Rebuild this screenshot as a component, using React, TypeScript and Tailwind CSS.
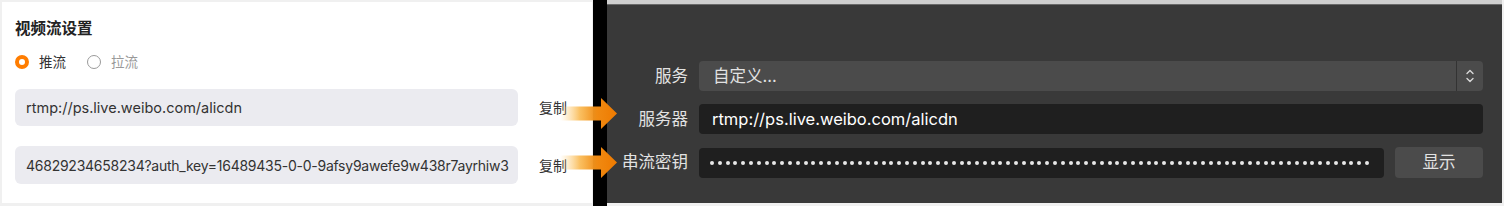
import React from 'react'

const FONT = { fontFamily: "Inter, 'Noto Sans CJK SC', sans-serif" }

function Arrow({ top, id }: { top: number; id: string }) {
  return (
    <svg className="absolute left-[560px]" style={{ top }} width="60" height="34" viewBox="0 0 60 34">
      <defs>
        <linearGradient id={id} x1="0" y1="0" x2="1" y2="0">
          <stop offset="0" stopColor="#ffd27a" stopOpacity="0" />
          <stop offset="0.35" stopColor="#f9b445" stopOpacity="0.85" />
          <stop offset="0.65" stopColor="#f08a12" />
          <stop offset="1" stopColor="#ee7a00" />
        </linearGradient>
      </defs>
      <path d="M0 9.5 H41 V1 L57 16.5 L41 32 V23.5 H0 Z" fill={`url(#${id})`} />
    </svg>
  )
}

function Dots({ count }: { count: number }) {
  return (
    <div className="flex gap-[3.8px]">
      {Array.from({ length: count }).map((_, i) => (
        <span key={i} className="block h-[4px] w-[4px] rounded-full bg-[#e8e8e8]" />
      ))}
    </div>
  )
}

export default function App() {
  return (
    <div className="relative flex h-[206px] w-[1504px] overflow-hidden bg-[#f0f0f0]" style={FONT}>
      {/* ── Left: web settings panel ─────────────────────────── */}
      <div className="ml-[2px] mt-[2px] h-[201px] w-[590px] bg-white pl-[13px]">
        <h2 className="mt-[16px] text-[15.5px] font-bold leading-[22px] text-[#222]">视频流设置</h2>
        <div className="mt-[11px] flex h-[22px] items-center text-[13.5px]">
          <span className="block h-[14px] w-[14px] rounded-full border-[4px] border-[#ff7d00] bg-white" />
          <span className="ml-[10px] text-[#333]">推流</span>
          <span className="ml-[21px] block h-[14px] w-[14px] rounded-full border-[1.5px] border-[#9a9a9a] bg-white" />
          <span className="ml-[10px] text-[#999]">拉流</span>
        </div>
        <div className="mt-[16px] flex items-center">
          <div className="flex h-[37px] w-[503px] items-center rounded-[6px] bg-[#ebebf0] pl-[11px] text-[14.5px] text-[#333]">
            rtmp://ps.live.weibo.com/alicdn
          </div>
          <span className="ml-[21px] text-[14px] text-[#333]">复制</span>
        </div>
        <div className="mt-[20px] flex items-center">
          <div className="flex h-[38px] w-[503px] items-center overflow-hidden whitespace-nowrap rounded-[6px] bg-[#ebebf0] pl-[11px] text-[14px] tracking-[-0.25px] text-[#333]">
            46829234658234?auth_key=16489435-0-0-9afsy9awefe9w438r7ayrhiw3
          </div>
          <span className="ml-[21px] text-[14px] text-[#333]">复制</span>
        </div>
      </div>

      {/* ── Divider ─────────────────────────────────────────── */}
      <div className="ml-[1px] h-[206px] w-[14px] bg-black" />

      {/* ── Right: OBS stream settings ─────────────────────── */}
      <div className="h-[203px] w-[895px] bg-[#393939]">
        <div className="h-[4px] bg-[#cfcfcf]" />
        <div className="h-[1px] bg-[#6a6a6a]" />
        <div className="flex flex-col gap-[13px] pr-[19px] pt-[56px] text-[16.5px] text-[#e2e2e2]">
          <div className="flex items-center">
            <span className="w-[81px] text-right">服务</span>
            <div className="ml-[11px] flex h-[30px] flex-1 items-center rounded-[4px] bg-[#4b4b4b]">
              <span className="flex-1 pl-[14px]">自定义...</span>
              <div className="flex h-full w-[27px] items-center justify-center border-l border-[#333]">
                <svg width="10" height="16" viewBox="0 0 10 16" fill="none" stroke="#d8d8d8" strokeWidth="1.4" strokeLinecap="round" strokeLinejoin="round">
                  <path d="M2 5.5 L5 2.5 L8 5.5" />
                  <path d="M2 10.5 L5 13.5 L8 10.5" />
                </svg>
              </div>
            </div>
          </div>
          <div className="flex items-center">
            <span className="w-[81px] text-right">服务器</span>
            <div className="ml-[11px] flex h-[30px] flex-1 items-center rounded-[4px] bg-[#1f1f1f] pl-[13px] text-[16.5px] text-white">
              rtmp://ps.live.weibo.com/alicdn
            </div>
          </div>
          <div className="flex items-center">
            <span className="w-[81px] text-right">串流密钥</span>
            <div className="ml-[11px] flex h-[30px] w-[685px] items-center rounded-[4px] bg-[#1f1f1f] pl-[11px]">
              <Dots count={85} />
            </div>
            <div className="ml-[11px] flex h-[31px] flex-1 items-center justify-center rounded-[4px] bg-[#4b4b4b]">
              显示
            </div>
          </div>
        </div>
      </div>

      {/* ── Callout arrows ─────────────────────────────────── */}
      <Arrow top={97} id="arrowA" />
      <Arrow top={146} id="arrowB" />
    </div>
  )
}
